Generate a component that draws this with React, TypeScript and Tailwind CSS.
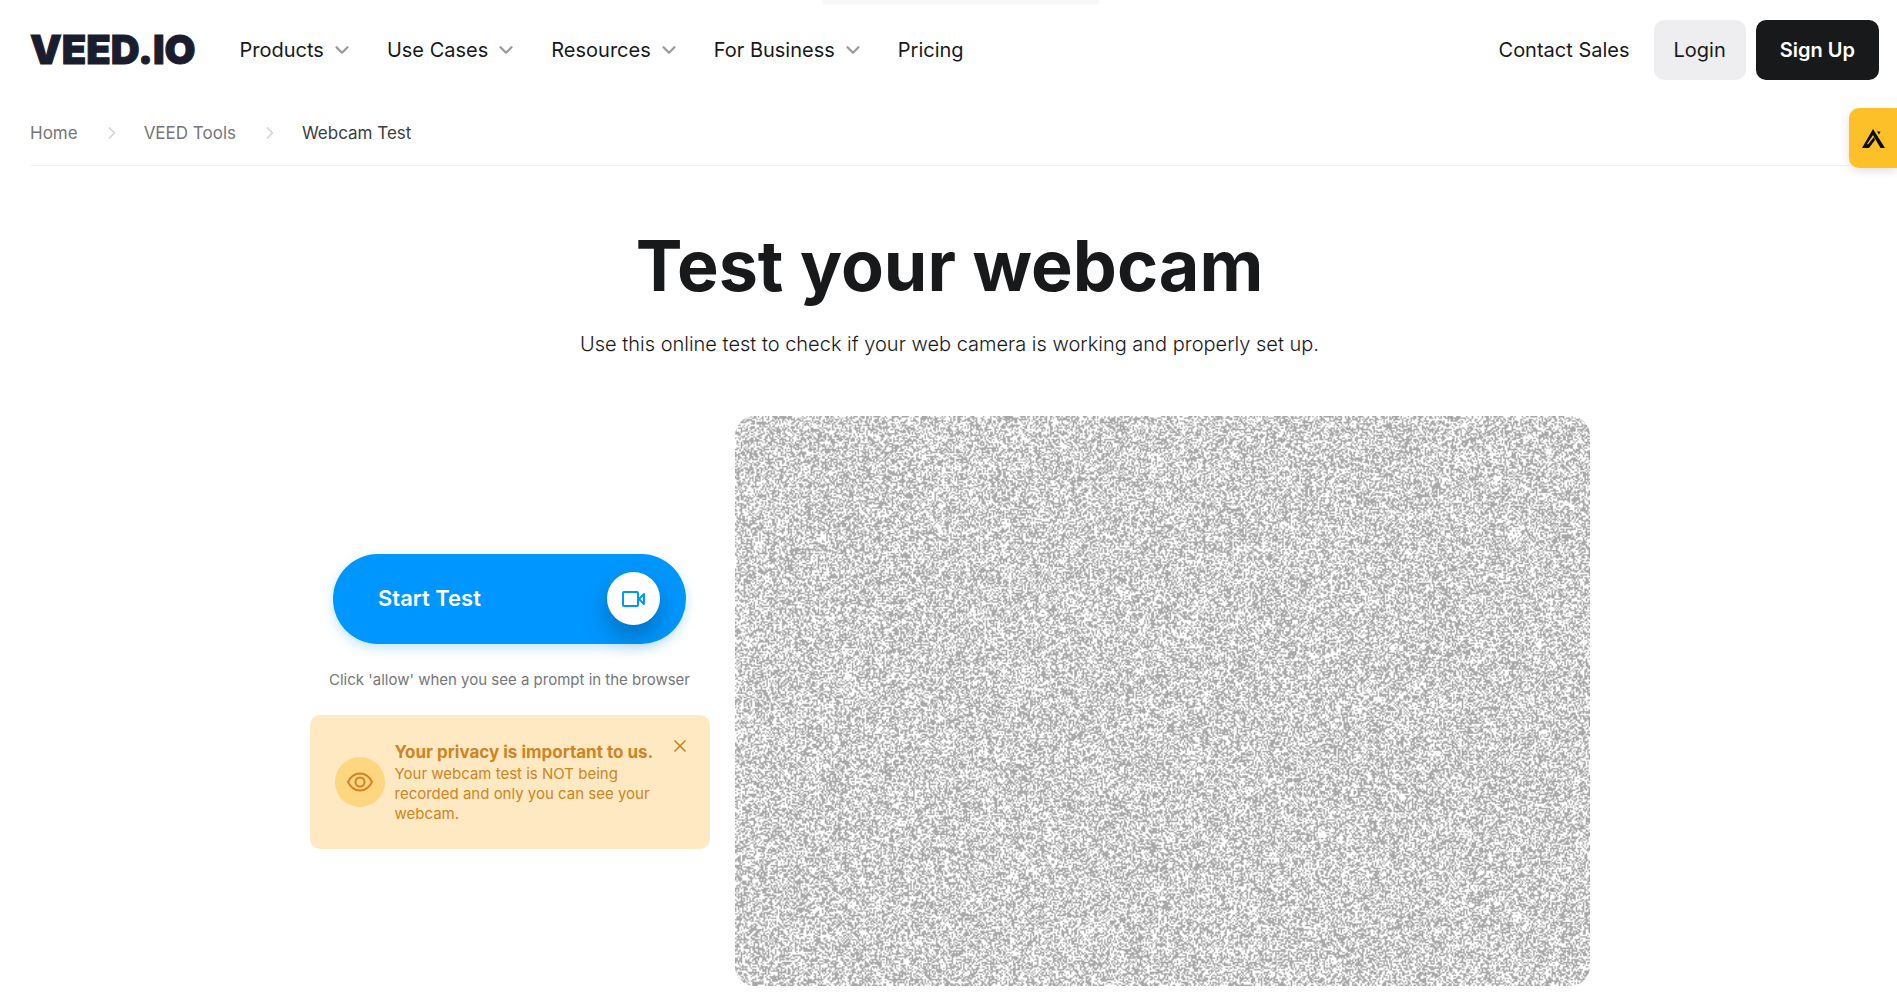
import { useEffect, useRef, useState } from 'react';
import { ChevronDown, ChevronRight, X } from 'lucide-react';

const navItems = [
  { label: 'Products', menu: true },
  { label: 'Use Cases', menu: true },
  { label: 'Resources', menu: true },
  { label: 'For Business', menu: true },
  { label: 'Pricing', menu: false },
];

const crumbs = ['Home', 'VEED Tools', 'Webcam Test'];

function Header() {
  return (
    <header className="flex items-center justify-between py-5 pr-[18px] pl-[30px]">
      <div className="flex items-center">
        <a href="#" className="text-[40px] leading-10 font-black text-[#1a1d2e] [-webkit-text-stroke:1px_#1a1d2e]">VEED.IO</a>
        <nav className="ml-11 flex items-center gap-[34px]">
          {navItems.map(item =>
            item.menu ? (
              <button key={item.label} className="flex items-center gap-[7px] text-xl leading-6">
                {item.label}
                <ChevronDown size={22} strokeWidth={2.5} className="text-[#9a9a9c]" />
              </button>
            ) : (
              <a key={item.label} href="#" className="text-xl leading-6">{item.label}</a>
            )
          )}
        </nav>
      </div>
      <div className="flex items-center text-xl leading-6">
        <a href="#" className="mr-6">Contact Sales</a>
        <a href="#" className="flex h-[60px] items-center rounded-[10px] bg-[#eeeef0] px-5">Login</a>
        <a href="#" className="ml-2.5 flex h-[60px] items-center rounded-[10px] bg-[#18191b] px-6 font-semibold text-white">Sign Up</a>
      </div>
    </header>
  );
}

function Breadcrumbs() {
  return (
    <nav aria-label="Breadcrumb" className="ml-[30px] border-b border-[#f3f3f4] pt-[21px] pb-5">
      <ol className="flex items-center gap-6 text-[17px] leading-6">
        {crumbs.map((crumb, i) => (
          <li key={crumb} className="flex items-center gap-[22px]">
            {i > 0 && <ChevronRight size={20} className="text-[#d4d4d6]" />}
            <a href="#" className={i === crumbs.length - 1 ? 'text-[#3c3d3f]' : 'text-[#757679]'}>{crumb}</a>
          </li>
        ))}
      </ol>
    </nav>
  );
}

function StaticNoise() {
  const ref = useRef<HTMLCanvasElement>(null);

  useEffect(() => {
    const canvas = ref.current;
    const ctx = canvas?.getContext('2d');
    if (!canvas || !ctx) return;
    const image = ctx.createImageData(canvas.width, canvas.height);
    let seed = 1337;
    for (let i = 0; i < image.data.length; i += 4) {
      seed = (Math.imul(seed, 1664525) + 1013904223) >>> 0;
      const shade = seed >>> 31 ? 255 : 168;
      image.data[i] = shade;
      image.data[i + 1] = shade;
      image.data[i + 2] = shade;
      image.data[i + 3] = 255;
    }
    ctx.putImageData(image, 0, 0);
  }, []);

  return <canvas ref={ref} width={600} height={400} className="block aspect-[3/2] w-full rounded-[20px]" />;
}

function PrivacyNotice({ onClose }: { onClose: () => void }) {
  return (
    <div className="mt-[23px] flex w-full items-center gap-2.5 rounded-[10px] bg-[#ffe9c2] py-[25px] pr-5 pl-[25px] text-[#d08322]">
      <div className="flex size-[50px] shrink-0 items-center justify-center rounded-full bg-[#ffd680]">
        <svg width="26" height="20" viewBox="0 0 26 20" fill="none" stroke="currentColor" strokeWidth="2" strokeLinejoin="round">
          <path d="M1 10c2.500-5 6.500-8.500 12-8.500S22.500 5 25 10c-2.500 5-6.500 8.500-12 8.500S3.500 15 1 10z" />
          <circle cx="13" cy="10" r="4.500" />
        </svg>
      </div>
      <div className="flex-1">
        <p className="text-[17px] leading-6 font-bold">Your privacy is important to us.</p>
        <p className="max-w-[265px] text-[15px] leading-5">
          Your webcam test is NOT being recorded and only you can see your webcam.
        </p>
      </div>
      <button aria-label="Close" onClick={onClose} className="-mt-1 -ml-4 shrink-0 self-start">
        <X size={20} strokeWidth={2} />
      </button>
    </div>
  );
}

export default function App() {
  const [showNotice, setShowNotice] = useState(true);

  return (
    <div className="min-h-screen bg-white font-[Inter,sans-serif] text-[#18191b]">
      <div className="absolute top-0 left-1/2 ml-3 h-1 w-[276px] -translate-x-1/2 bg-[#f7f7f7] shadow-[0_0_6px_#f7f7f7]" />
      <Header />
      <Breadcrumbs />

      <main className="pl-0.5">
        <h1 className="mt-16 text-center text-[70px] leading-[72px] font-bold">Test your webcam</h1>
        <p className="mt-7 text-center text-xl leading-7 font-light">
          Use this online test to check if your web camera is working and properly set up.
        </p>

        <section className="mx-auto mt-[58px] flex max-w-[1280px] items-center gap-[25px]">
          <div className="flex w-[400px] shrink-0 flex-col items-center">
            <button className="flex h-[90px] w-[353px] items-center justify-between rounded-full bg-[#0096ff] pr-[26px] pl-[45px] text-[22px] font-semibold text-white shadow-[0_4px_12px_rgba(0,150,255,0.25)]">
              Start Test
              <span className="flex size-[53px] items-center justify-center rounded-full bg-white shadow-[0_12px_24px_rgba(0,0,0,0.25)]">
                <svg width="24" height="24" viewBox="0 0 24 24" fill="none" stroke="#0096ff" strokeWidth="2" strokeLinejoin="round">
                  <rect x="1" y="5" width="15" height="14" rx="1" />
                  <path d="M17 12l5-5v10z" />
                </svg>
              </span>
            </button>
            <p className="mt-6 text-[15px] leading-6 text-[#757679]">Click 'allow' when you see a prompt in the browser</p>
            {showNotice && <PrivacyNotice onClose={() => setShowNotice(false)} />}
          </div>
          <div className="min-w-0 flex-1">
            <StaticNoise />
          </div>
        </section>
      </main>

      <button aria-label="Open extension" className="absolute top-[108px] right-0 flex h-[60px] w-12 items-center justify-center rounded-l-[10px] bg-[#fdc029] shadow-[0_3px_10px_rgba(0,0,0,0.12)]">
        <svg width="23" height="19" viewBox="0 0 23 19" fill="#0b0b0b">
          <path d="M11 0L0 19h7l6-8-1-3-6 7.500-1-.5 6-9L18.500 19H23z" />
          <path d="M15 2.500h3.500l-1.500 3z" />
        </svg>
      </button>
    </div>
  );
}
